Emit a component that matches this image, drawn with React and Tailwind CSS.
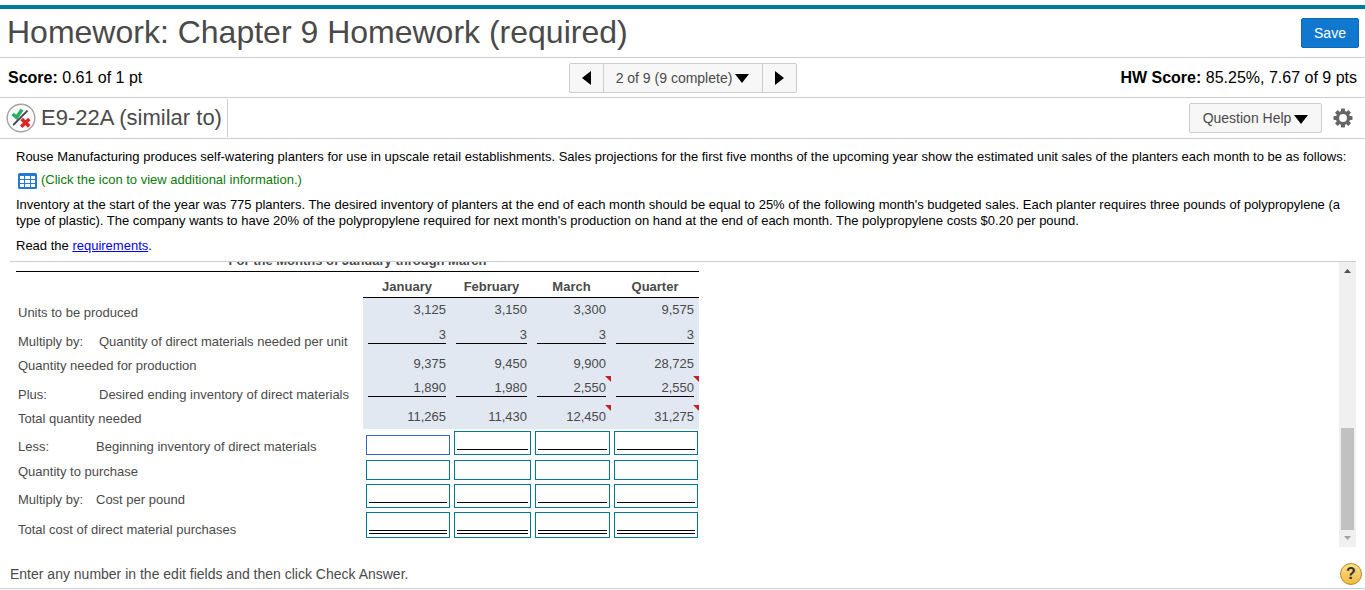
import { useState } from "react";

const columns = ["January", "February", "March", "Quarter"];

const filledRows = [
	{ label: "Units to be produced", values: ["3,125", "3,150", "3,300", "9,575"] },
	{
		prefix: "Multiply by:",
		label: "Quantity of direct materials needed per unit",
		values: ["3", "3", "3", "3"],
		underline: true,
	},
	{ label: "Quantity needed for production", values: ["9,375", "9,450", "9,900", "28,725"] },
	{
		prefix: "Plus:",
		label: "Desired ending inventory of direct materials",
		values: ["1,890", "1,980", "2,550", "2,550"],
		underline: true,
		flagged: [2, 3],
	},
	{
		label: "Total quantity needed",
		values: ["11,265", "11,430", "12,450", "31,275"],
		flagged: [2, 3],
	},
];

const inputRows = [
	{ prefix: "Less:", label: "Beginning inventory of direct materials", rule: "single", height: "h-7" },
	{ label: "Quantity to purchase", rule: "none", height: "h-[25px]" },
	{ prefix: "Multiply by:", label: "Cost per pound", rule: "single", height: "h-7" },
	{ label: "Total cost of direct material purchases", rule: "double", height: "h-[30px]" },
];

const boxStyles = {
	none: "h-5 pb-0",
	single: "h-6 pb-1",
	double: "h-[26px] pb-[3px]",
};

const ruleStyles = {
	none: "",
	single: "border-b border-black",
	double: "border-b-4 border-double border-black",
};

const DownArrow = () => (
	<svg width="14" height="9" viewBox="0 0 14 9" className="mt-0.5" aria-hidden="true">
		<path d="M0 0h14L7 9z" fill="#000" />
	</svg>
);

const PartialCreditIcon = () => (
	<svg width="30" height="30" viewBox="0 0 30 30" aria-hidden="true">
		<circle cx="15" cy="15" r="13.8" fill="#fff" stroke="#a3a3a3" strokeWidth="1.4" />
		<path d="M6.6 11l4 3.4L16 6.4" fill="none" stroke="#27b060" strokeWidth="3.6" />
		<path d="M7.2 22L21.5 7.6" stroke="#444" strokeWidth="1.8" />
		<path d="M15.6 16l7.6 7.4M23.4 16L15.2 23.8" stroke="#dc2626" strokeWidth="3.6" />
	</svg>
);

const GearIcon = () => (
	<svg width="20" height="20" viewBox="0 0 20 20" aria-hidden="true">
		<g fill="#666">
			<rect x="8" y="0.5" width="4" height="19" rx="0.8" />
			<rect x="8" y="0.5" width="4" height="19" rx="0.8" transform="rotate(45 10 10)" />
			<rect x="8" y="0.5" width="4" height="19" rx="0.8" transform="rotate(90 10 10)" />
			<rect x="8" y="0.5" width="4" height="19" rx="0.8" transform="rotate(135 10 10)" />
			<circle cx="10" cy="10" r="7.2" />
		</g>
		<circle cx="10" cy="10" r="3.9" fill="#fff" />
	</svg>
);

const TableIcon = () => (
	<svg width="19" height="16" viewBox="0 0 19 16" aria-hidden="true">
		<rect width="19" height="16" rx="1.5" fill="#2477d4" />
		<g fill="#fff">
			<path d="M2 3h4v3H2zM7 3h5v3H7zM13 3h4v3h-4z" />
			<path d="M2 7h4v3H2zM7 7h5v3H7zM13 7h4v3h-4z" />
			<path d="M2 11h4v3H2zM7 11h5v3H7zM13 11h4v3h-4z" />
		</g>
	</svg>
);

const RowLabel = ({ prefix, prefixWidth, label }) => (
	<th scope="row" className="pb-0.5 pl-0.5 text-left align-bottom font-normal whitespace-nowrap">
		{prefix && <span className={`inline-block ${prefixWidth}`}>{prefix}</span>}
		{label}
	</th>
);

const BudgetTable = () => {
	const [answers, setAnswers] = useState({});

	return (
		<table className="w-[683px] shrink-0 table-fixed border-collapse text-[13px] leading-4">
			<caption className="border-b border-black pb-0.5 font-bold">
				For the Months of January through March
			</caption>
			<colgroup>
				<col />
				<col className="w-[88px]" />
				<col className="w-[81px]" />
				<col className="w-[79px]" />
				<col className="w-[88px]" />
			</colgroup>
			<thead>
				<tr className="h-[26px]">
					<td />
					{columns.map((name) => (
						<th key={name} scope="col" className="p-0 pt-1">
							<div className="h-[22px] border-b border-black pt-[3px]">{name}</div>
						</th>
					))}
				</tr>
			</thead>
			<tbody>
				{filledRows.map((row, i) => (
					<tr key={row.label} className={row.underline ? "h-[29px]" : i === 0 ? "h-[25px]" : "h-6"}>
						<RowLabel prefix={row.prefix} prefixWidth="w-[81px]" label={row.label} />
						{row.values.map((value, col) => (
							<td key={columns[col]} className="relative bg-[#e1e8f2] px-[5px] pt-1 pb-0 text-right align-top">
								<div className={row.underline ? "h-[17px] border-b border-black" : ""}>{value}</div>
								{row.flagged?.includes(col) && (
									<svg className="absolute top-0 right-0" width="6" height="6" viewBox="0 0 6 6" aria-hidden="true">
										<path d="M0 0h6v6z" fill="#c4202a" />
									</svg>
								)}
							</td>
						))}
					</tr>
				))}
				{inputRows.map((row, i) => (
					<tr key={row.label} className={row.height}>
						<RowLabel prefix={row.prefix} prefixWidth="w-[78px]" label={row.label} />
						{columns.map((name, col) => {
							const id = `${i}-${col}`;
							const active = i === 0 && col === 0;
							const rule = active ? "none" : row.rule;
							return (
								<td key={name} className="p-0 pr-px pb-0.5 pl-[3px] align-bottom">
									<div
										className={`flex border bg-white px-0.5 ${boxStyles[rule]} ${active ? "border-[#3366cc]" : "border-[#007a99]"}`}
									>
										<input
											type="text"
											aria-label={`${row.label}, ${name}`}
											value={answers[id] ?? ""}
											onChange={(e) => setAnswers({ ...answers, [id]: e.target.value })}
											className={`h-full w-full min-w-0 text-right outline-none ${ruleStyles[rule]}`}
										/>
									</div>
								</td>
							);
						})}
					</tr>
				))}
			</tbody>
		</table>
	);
};

const ScrollTrack = () => (
	<div className="flex w-[17px] shrink-0 flex-col items-center justify-between bg-[#f0f0f0] py-[7px]">
		<svg width="7" height="4" viewBox="0 0 7 4" aria-hidden="true">
			<path d="M0 4L3.5 0 7 4z" fill="#505050" />
		</svg>
		<div className="flex flex-col items-center gap-[6px]">
			<div className="h-[102px] w-[13px] bg-[#c1c1c1]" />
			<svg width="7" height="4" viewBox="0 0 7 4" aria-hidden="true">
				<path d="M0 0h7L3.5 4z" fill="#a3a3a3" />
			</svg>
		</div>
	</div>
);

const App = () => {
	return (
		<div className="bg-white pt-[5px] font-['Liberation_Sans',Arial,sans-serif] text-[#4a4a4a]">
			<header className="flex h-[53px] items-center justify-between border-t-4 border-b border-t-[#007a9c] border-b-[#c9cdda] pr-1.5 pl-[7px]">
				<h1 className="pb-0.5 text-[32px] leading-9">Homework: Chapter 9 Homework (required)</h1>
				<button type="button" className="h-[30px] w-[58px] rounded-xs border border-[#0d6ab8] bg-[#1079cf] text-sm text-white">
					Save
				</button>
			</header>

			<div className="grid h-10 grid-cols-[1fr_auto_1fr] items-center border-b border-[#c9cdda] px-2 text-base text-black">
				<p><b>Score:</b> 0.61 of 1 pt</p>
				<nav className="flex h-[30px] items-stretch divide-x divide-[#ccc] rounded-xs border border-[#ccc] bg-[#f7f7f7]">
					<button type="button" aria-label="Previous question" className="flex w-[34px] items-center justify-center">
						<svg width="9" height="14" viewBox="0 0 9 14" aria-hidden="true">
							<path d="M9 0v14L0 7z" fill="#000" />
						</svg>
					</button>
					<button type="button" className="flex w-[159px] items-center justify-center gap-[3px] text-sm text-[#4a4a4a]">
						2 of 9 (9 complete)
						<DownArrow />
					</button>
					<button type="button" aria-label="Next question" className="flex w-[33px] items-center justify-center">
						<svg width="9" height="14" viewBox="0 0 9 14" aria-hidden="true">
							<path d="M0 0v14l9-7z" fill="#000" />
						</svg>
					</button>
				</nav>
				<p className="text-right"><b>HW Score:</b> 85.25%, 7.67 of 9 pts</p>
			</div>

			<div className="flex h-[41px] items-center justify-between border-b border-[#c9cdda] pr-3 pl-1.5">
				<div className="flex h-[38px] items-center gap-[5px] border-r border-[#c9cdda] pr-[5px]">
					<PartialCreditIcon />
					<h2 className="text-[22px] leading-6">E9-22A (similar to)</h2>
				</div>
				<div className="flex items-center gap-[11px]">
					<button type="button" className="flex h-[30px] w-[133px] items-center justify-center gap-[3px] rounded-xs border border-[#ccc] bg-[#f7f7f7] text-sm">
						Question Help
						<DownArrow />
					</button>
					<button type="button" aria-label="Settings">
						<GearIcon />
					</button>
				</div>
			</div>

			<section className="px-4 pt-2.5 pb-[7px] text-[13px] leading-4 text-black">
				<p>
					Rouse Manufacturing produces self-watering planters for use in upscale retail establishments. Sales
					projections for the first five months of the upcoming year show the estimated unit sales of the planters
					each month to be as follows:
				</p>
				<button type="button" className="mt-[7px] ml-0.5 flex gap-1 text-[#0a7a0a]">
					<span className="pt-px"><TableIcon /></span>
					(Click the icon to view additional information.)
				</button>
				<p className="mt-2">
					Inventory at the start of the year was 775 planters. The desired inventory of planters at the end of each
					month should be equal to 25% of the following month's budgeted sales. Each planter requires three pounds of
					polypropylene (a type of plastic). The company wants to have 20% of the polypropylene required for next
					month's production on hand at the end of each month. The polypropylene costs $0.20 per pound.
				</p>
				<p className="mt-[9px]">
					Read the <a href="#requirements" className="text-[#0000ee] underline">requirements</a>.
				</p>
			</section>

			<main className="mr-[9px] ml-2.5 flex h-[286px] border-t border-[#c9cdda]">
				<div className="flex flex-1 flex-col justify-end overflow-hidden pb-[7px] pl-1.5">
					<BudgetTable />
				</div>
				<ScrollTrack />
			</main>

			<footer className="flex h-[42px] items-center justify-between border-b border-[#c9cdda] pt-3 pr-[3px] pl-2.5 text-sm">
				<p>Enter any number in the edit fields and then click Check Answer.</p>
				<button
					type="button"
					aria-label="Help"
					className="h-[22px] w-[22px] rounded-full border border-[#b98a2e] bg-linear-to-b from-[#ffdf85] to-[#f3b93c] text-base leading-5 font-bold text-[#333]"
				>
					?
				</button>
			</footer>
		</div>
	);
};

export default App;
